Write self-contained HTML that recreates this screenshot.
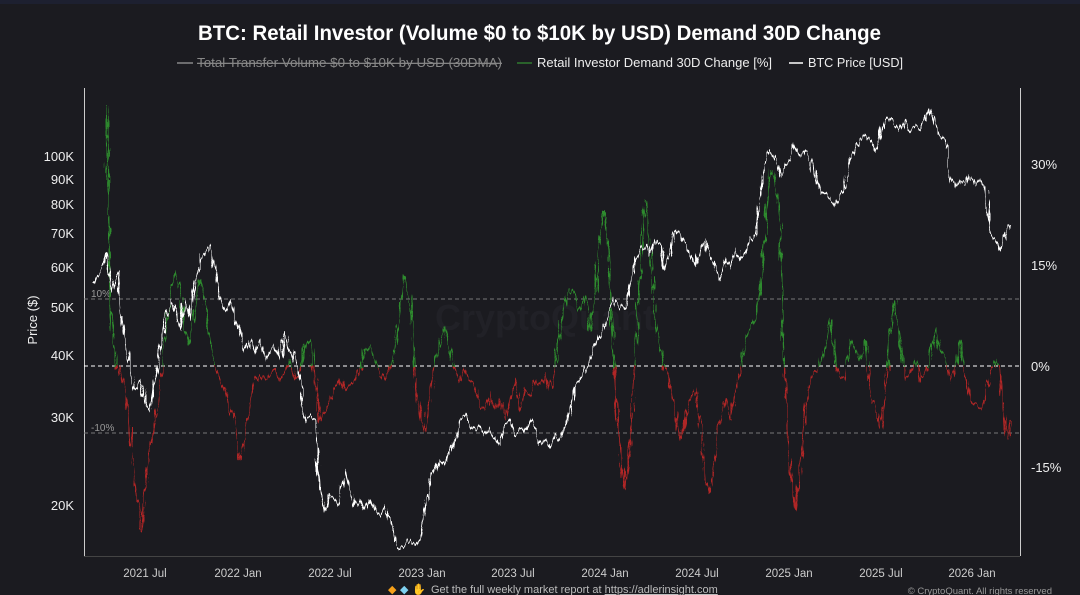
<!DOCTYPE html>
<html><head><meta charset="utf-8"><style>
html,body{margin:0;padding:0;background:#1b1b20;width:1080px;height:595px;overflow:hidden;font-family:"Liberation Sans",sans-serif}
</style></head><body>
<svg width="1080" height="595" xmlns="http://www.w3.org/2000/svg" font-family="Liberation Sans, sans-serif">
<rect width="1080" height="595" fill="#1b1b20"/>
<rect width="1080" height="4" fill="#1d2030"/>
<text x="198" y="40" fill="#fff" font-size="21" font-weight="bold" textLength="683" lengthAdjust="spacingAndGlyphs">BTC: Retail Investor (Volume $0 to $10K by USD) Demand 30D Change</text>
<g font-size="12.5">
<line x1="177" y1="63" x2="193" y2="63" stroke="#888" stroke-width="1.5"/>
<text x="197" y="67" fill="#888" text-decoration="line-through" textLength="305" lengthAdjust="spacingAndGlyphs">Total Transfer Volume $0 to $10K by USD (30DMA)</text>
<line x1="517" y1="63" x2="532" y2="63" stroke="#2f7a2f" stroke-width="1.5"/>
<text x="537" y="67" fill="#eee" textLength="235" lengthAdjust="spacingAndGlyphs">Retail Investor Demand 30D Change [%]</text>
<line x1="789" y1="63" x2="803" y2="63" stroke="#fff" stroke-width="1.5"/>
<text x="808" y="67" fill="#eee" textLength="95" lengthAdjust="spacingAndGlyphs">BTC Price [USD]</text>
</g>
<line x1="84.5" y1="88" x2="84.5" y2="556" stroke="#ccc" stroke-width="1"/>
<line x1="1020.5" y1="88" x2="1020.5" y2="556" stroke="#ccc" stroke-width="1"/>
<line x1="84" y1="556.5" x2="1020" y2="556.5" stroke="#444" stroke-width="1"/>
<g fill="#eee" font-size="13" text-anchor="end">
<text x="74" y="161">100K</text><text x="74" y="184">90K</text><text x="74" y="209">80K</text><text x="74" y="238">70K</text><text x="74" y="272">60K</text><text x="74" y="312">50K</text><text x="74" y="360">40K</text><text x="74" y="422">30K</text><text x="74" y="510">20K</text>
</g>
<text transform="translate(37,320) rotate(-90)" fill="#eee" font-size="13" text-anchor="middle">Price ($)</text>
<g fill="#eee" font-size="13">
<text x="1031" y="169">30%</text><text x="1031" y="270">15%</text><text x="1031" y="371">0%</text><text x="1031" y="472">-15%</text>
</g>
<text x="545" y="330" fill="#212127" font-size="36" font-weight="bold" text-anchor="middle">CryptoQuant</text>
<line x1="84" y1="299" x2="1020" y2="299" stroke="#777" stroke-dasharray="4,3"/>
<line x1="84" y1="366" x2="1020" y2="366" stroke="#fff" stroke-dasharray="4,3"/>
<line x1="84" y1="433" x2="1020" y2="433" stroke="#777" stroke-dasharray="4,3"/>
<text x="91" y="297" fill="#999" font-size="10">10%</text>
<text x="91" y="431" fill="#999" font-size="10">-10%</text>
<defs>
<filter id="jit" x="-5%" y="-5%" width="110%" height="110%">
<feTurbulence type="fractalNoise" baseFrequency="0.35 0.05" numOctaves="2" seed="3"/>
<feDisplacementMap in="SourceGraphic" scale="9" xChannelSelector="R" yChannelSelector="G"/>
</filter>
<clipPath id="up"><rect x="84" y="88" width="936" height="278"/></clipPath>
<clipPath id="dn"><rect x="84" y="366" width="936" height="190"/></clipPath>
<polyline id="dem" fill="none" stroke-width="1.3" points="107,105 110,300 113,340 117,366 122,380 127,400 132,460 137,500 141,530 145,490 150,450 155,420 160,390 165,340 170,300 175,270 180,290 185,330 190,345 195,310 200,280 205,300 210,340 215,366 220,380 225,390 230,410 235,420 240,460 245,440 250,400 255,380 260,375 265,380 270,375 275,370 280,380 285,370 290,360 295,380 300,370 305,345 310,340 315,380 320,420 325,410 330,400 335,390 340,380 345,390 350,385 355,380 360,370 365,350 370,345 375,360 380,375 385,380 390,370 395,350 400,310 405,275 410,300 415,380 420,420 425,430 430,400 435,360 440,340 445,330 450,350 455,370 460,380 465,370 470,380 475,390 480,405 485,410 490,395 495,410 500,400 505,420 510,400 515,380 520,410 525,390 530,395 535,380 540,385 545,375 550,390 555,370 560,330 565,300 570,290 575,295 580,310 585,295 590,330 595,300 600,230 605,210 610,290 615,380 620,450 625,490 630,440 635,360 640,280 645,200 650,240 655,320 660,350 665,370 670,380 675,410 680,440 685,420 690,400 695,390 700,420 705,480 710,495 715,460 720,420 725,400 730,420 735,390 740,370 745,340 750,330 755,320 760,290 765,240 770,170 775,180 780,220 785,380 790,470 795,510 800,470 805,420 810,380 815,370 820,365 825,345 830,320 835,360 840,375 845,380 850,340 855,350 860,360 865,340 870,395 875,405 880,430 885,400 890,330 895,300 900,340 905,380 910,375 915,360 920,380 925,370 930,360 935,330 940,350 945,355 950,380 955,370 960,340 965,370 970,400 975,405 980,410 985,400 990,375 995,360 1000,370 1005,430 1008,440 1011,420"/>
</defs>
<g filter="url(#jit)">
<use href="#dem" stroke="#2e8b2e" clip-path="url(#up)"/>
<use href="#dem" stroke="#b02626" clip-path="url(#dn)"/>
</g>
<polyline filter="url(#jit)" fill="none" stroke="#fff" stroke-width="1.4" points="93,285 100,270 107,255 112,290 118,270 122,320 128,360 135,390 140,380 145,400 150,410 155,380 160,350 165,320 170,300 175,310 180,330 185,300 190,320 195,280 200,260 205,250 210,245 215,270 220,300 225,310 230,300 235,320 240,330 245,350 250,340 255,355 260,340 265,360 270,350 275,345 280,360 285,330 290,350 295,360 300,380 305,420 310,415 315,420 320,490 325,510 330,495 335,500 340,505 345,470 350,490 355,505 360,500 365,510 370,500 375,510 380,515 385,505 390,520 395,540 400,550 405,545 410,540 415,545 420,540 425,510 430,480 435,470 440,460 445,465 450,450 455,440 460,420 465,415 470,425 475,430 480,425 485,435 490,430 495,440 500,445 505,425 510,420 515,435 520,430 525,430 530,420 535,430 540,445 545,440 550,445 555,435 560,440 565,430 570,410 575,385 580,380 585,370 590,360 595,345 600,335 605,325 610,310 615,300 620,310 625,305 630,290 635,260 640,250 645,245 650,255 655,240 660,245 665,270 670,250 675,230 680,235 685,245 690,255 695,265 700,250 705,240 710,255 715,270 720,280 725,260 730,270 735,250 740,260 745,250 750,240 755,235 760,200 765,165 770,150 775,160 780,175 785,165 790,160 795,145 800,155 805,150 810,160 815,175 820,195 825,190 830,200 835,205 840,195 845,185 850,160 855,150 860,140 865,135 870,140 875,150 880,135 885,120 890,118 895,125 900,130 905,120 910,130 915,125 920,130 925,120 930,110 935,125 940,135 945,140 950,175 955,190 960,180 965,185 970,175 975,185 980,180 985,190 990,230 995,240 1000,250 1005,235 1010,225"/>
<g fill="#ccc" font-size="11.5" text-anchor="middle">
<text x="145" y="577">2021 Jul</text><text x="238" y="577">2022 Jan</text><text x="330" y="577">2022 Jul</text><text x="422" y="577">2023 Jan</text><text x="513" y="577">2023 Jul</text><text x="605" y="577">2024 Jan</text><text x="697" y="577">2024 Jul</text><text x="789" y="577">2025 Jan</text><text x="881" y="577">2025 Jul</text><text x="972" y="577">2026 Jan</text>
</g>
<text x="388" y="593" fill="#f7a11a" font-size="11">◆</text>
<text x="400" y="593" fill="#7fd0f0" font-size="11">◆</text>
<text x="412" y="593" fill="#e8b040" font-size="11">✋</text>
<text x="431" y="593" fill="#bbb" font-size="11">Get the full weekly market report at <tspan text-decoration="underline">https://adlerinsight.com</tspan></text>
<text x="1052" y="594" fill="#999" font-size="9.5" text-anchor="end">© CryptoQuant. All rights reserved</text>
</svg>
</body></html>
